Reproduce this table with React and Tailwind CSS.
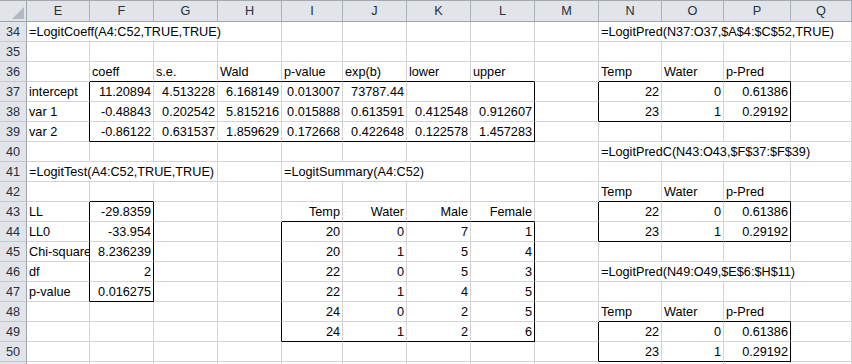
const COLS = ["E", "F", "G", "H", "I", "J", "K", "L", "M", "N", "O", "P", "Q"];

// boxes with black outline: [r1, r2, c1, c2]
const BOXES = [
  [37, 39, 1, 7],
  [43, 47, 1, 1],
  [44, 49, 4, 7],
  [37, 38, 9, 11],
  [43, 44, 9, 11],
  [49, 50, 9, 11],
];

const R = "r";
const SHEET = {
  34: [
    [0, "=LogitCoeff(A4:C52,TRUE,TRUE)", "l", 4],
    [9, "=LogitPred(N37:O37,$A$4:$C$52,TRUE)", "l", 4],
  ],
  36: [
    [1, "coeff"], [2, "s.e."], [3, "Wald"], [4, "p-value"], [5, "exp(b)"], [6, "lower"], [7, "upper"],
    [9, "Temp"], [10, "Water"], [11, "p-Pred"],
  ],
  37: [
    [0, "intercept"], [1, "11.20894", R], [2, "4.513228", R], [3, "6.168149", R], [4, "0.013007", R], [5, "73787.44", R],
    [9, "22", R], [10, "0", R], [11, "0.61386", R],
  ],
  38: [
    [0, "var 1"], [1, "-0.48843", R], [2, "0.202542", R], [3, "5.815216", R], [4, "0.015888", R], [5, "0.613591", R],
    [6, "0.412548", R], [7, "0.912607", R],
    [9, "23", R], [10, "1", R], [11, "0.29192", R],
  ],
  39: [
    [0, "var 2"], [1, "-0.86122", R], [2, "0.631537", R], [3, "1.859629", R], [4, "0.172668", R], [5, "0.422648", R],
    [6, "0.122578", R], [7, "1.457283", R],
  ],
  40: [[9, "=LogitPredC(N43:O43,$F$37:$F$39)", "l", 4]],
  41: [
    [0, "=LogitTest(A4:C52,TRUE,TRUE)", "l", 3],
    [4, "=LogitSummary(A4:C52)", "l", 3],
  ],
  42: [[9, "Temp"], [10, "Water"], [11, "p-Pred"]],
  43: [
    [0, "LL"], [1, "-29.8359", R],
    [4, "Temp", R], [5, "Water", R], [6, "Male", R], [7, "Female", R],
    [9, "22", R], [10, "0", R], [11, "0.61386", R],
  ],
  44: [
    [0, "LL0"], [1, "-33.954", R],
    [4, "20", R], [5, "0", R], [6, "7", R], [7, "1", R],
    [9, "23", R], [10, "1", R], [11, "0.29192", R],
  ],
  45: [[0, "Chi-square"], [1, "8.236239", R], [4, "20", R], [5, "1", R], [6, "5", R], [7, "4", R]],
  46: [
    [0, "df"], [1, "2", R], [4, "22", R], [5, "0", R], [6, "5", R], [7, "3", R],
    [9, "=LogitPred(N49:O49,$E$6:$H$11)", "l", 4],
  ],
  47: [[0, "p-value"], [1, "0.016275", R], [4, "22", R], [5, "1", R], [6, "4", R], [7, "5", R]],
  48: [[4, "24", R], [5, "0", R], [6, "2", R], [7, "5", R], [9, "Temp"], [10, "Water"], [11, "p-Pred"]],
  49: [
    [4, "24", R], [5, "1", R], [6, "2", R], [7, "6", R],
    [9, "22", R], [10, "0", R], [11, "0.61386", R],
  ],
  50: [[9, "23", R], [10, "1", R], [11, "0.29192", R]],
};

const ROWS = [34, 35, 36, 37, 38, 39, 40, 41, 42, 43, 44, 45, 46, 47, 48, 49, 50, 51];

function inBox(r, c) {
  return BOXES.find(([r1, r2, c1, c2]) => r >= r1 && r <= r2 && c >= c1 && c <= c2);
}

function rightBlack(r, c) {
  const here = inBox(r, c);
  if (here && here[3] === c) return true;
  const next = inBox(r, c + 1);
  return Boolean(next && next[2] === c + 1);
}

function bottomBlack(r, c) {
  const here = inBox(r, c);
  if (here && here[1] === r) return true;
  const below = inBox(r + 1, c);
  return Boolean(below && below[0] === r + 1);
}

function spanClass(span) {
  if (span === 4) return "col-span-4";
  if (span === 3) return "col-span-3";
  return "";
}

function Cell({ r, c, text, align, span = 1 }) {
  const last = c + span - 1;
  const rb = rightBlack(r, last) ? "border-r-black" : "border-r-[#d4d4d4]";
  const bb = bottomBlack(r, c) ? "border-b-black" : "border-b-[#d4d4d4]";
  return (
    <div
      className={`${spanClass(span)} h-[20px] overflow-hidden whitespace-nowrap border-r border-b ${rb} ${bb} px-[2px] leading-[20px] ${
        align === "r" ? "text-right" : "text-left"
      }`}
    >
      {text}
    </div>
  );
}

function SheetRow({ r }) {
  const defs = SHEET[r] || [];
  const cells = [];
  let c = 0;
  while (c < COLS.length) {
    const def = defs.find((d) => d[0] === c);
    if (def) {
      const span = def[3] || 1;
      cells.push(<Cell key={c} r={r} c={c} text={def[1]} align={def[2] || "l"} span={span} />);
      c += span;
    } else {
      cells.push(<Cell key={c} r={r} c={c} />);
      c += 1;
    }
  }
  // row 51 only peeks in at the bottom edge, its number is not visible
  return (
    <>
      <div className="h-[20px] border-r border-b border-r-[#9ea4ab] border-b-[#c3c8cf] bg-[#e1e4e9] text-center leading-[20px] text-[#27303c]">
        {r < 51 ? r : ""}
      </div>
      {cells}
    </>
  );
}

export default function App() {
  return (
    <div className="h-[364px] w-[852px] overflow-hidden bg-white font-['Liberation_Sans',Arial,sans-serif] text-[12.7px] text-black">
      <div className="grid grid-cols-[27px_63px_64px_64px_64px_61px_64px_64px_64px_64px_63px_62px_67px_61px]">
        <div className="relative h-[22px] border-t border-r border-b border-t-[#a3a8af] border-r-[#9ea4ab] border-b-[#9ea4ab] bg-[#e1e4e9]">
          <svg className="absolute left-0 top-0" width="26" height="20" viewBox="0 0 26 20">
            <polygon points="12,18 24,18 24,6" fill="#b4b9c1" />
          </svg>
        </div>
        {COLS.map((k) => (
          <div
            key={k}
            className="h-[22px] border-t border-r border-b border-t-[#a3a8af] border-r-[#aab0b8] border-b-[#9ea4ab] bg-[#e1e4e9] text-center leading-[20px] text-[#27303c]"
          >
            {k}
          </div>
        ))}
        {ROWS.map((r) => (
          <SheetRow key={r} r={r} />
        ))}
      </div>
    </div>
  );
}
